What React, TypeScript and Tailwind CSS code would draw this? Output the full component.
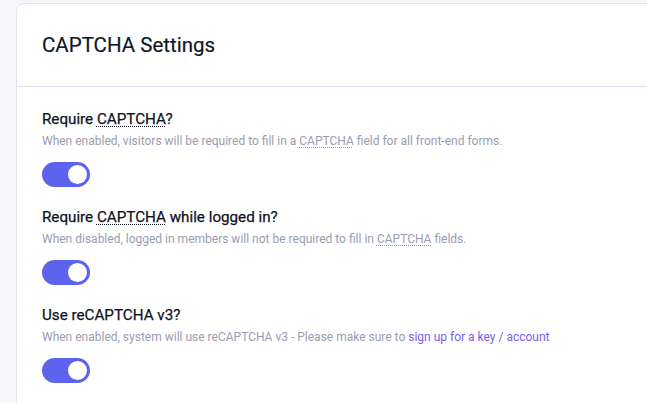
const ABBR = 'underline decoration-dotted decoration-1 underline-offset-2';

function Toggle() {
  return (
    <div className="w-[48px] h-[25px] rounded-full bg-[#5d62ef] flex items-center justify-end pr-[3px]">
      <div className="w-[19px] h-[19px] rounded-full bg-white" />
    </div>
  );
}

function Setting({ title, desc }: { title: React.ReactNode; desc: React.ReactNode }) {
  return (
    <div className="mb-[20px]">
      <div className="text-[15.2px] font-normal text-[#0f1222] leading-[20px] [-webkit-text-stroke:0.25px_#0f1222]">{title}</div>
      <div className="text-[12px] text-[#9a9cb4] leading-[16px] mt-[4px]">{desc}</div>
      <div className="mt-[13px]">
        <Toggle />
      </div>
    </div>
  );
}

export default function App() {
  return (
    <div className="h-[403px] overflow-hidden bg-[#f6f6fa] pl-[16px] pt-[3px]" style={{ fontFamily: 'Roboto, "Liberation Sans", sans-serif' }}>
      <div className="w-[700px] h-[500px] bg-white border border-[#e4e2f0] rounded-[8px]">
        <div className="h-[83px] border-b border-[#e2def0] flex items-center px-[25px]">
          <h1 className="text-[20.5px] text-[#111827] font-normal [-webkit-text-stroke:0.2px_#111827]">CAPTCHA Settings</h1>
        </div>
        <div className="px-[25px] pt-[22px]">
          <Setting
            title={<>Require <abbr className={ABBR}>CAPTCHA</abbr>?</>}
            desc={<>When enabled, visitors will be required to fill in a <abbr className={ABBR}>CAPTCHA</abbr> field for all front-end forms.</>}
          />
          <Setting
            title={<>Require <abbr className={ABBR}>CAPTCHA</abbr> while logged in?</>}
            desc={<>When disabled, logged in members will not be required to fill in <abbr className={ABBR}>CAPTCHA</abbr> fields.</>}
          />
          <Setting
            title="Use reCAPTCHA v3?"
            desc={<>When enabled, system will use reCAPTCHA v3 - Please make sure to <a href="#" className="text-[#7b5cf0]">sign up for a key / account</a></>}
          />
        </div>
      </div>
    </div>
  );
}
